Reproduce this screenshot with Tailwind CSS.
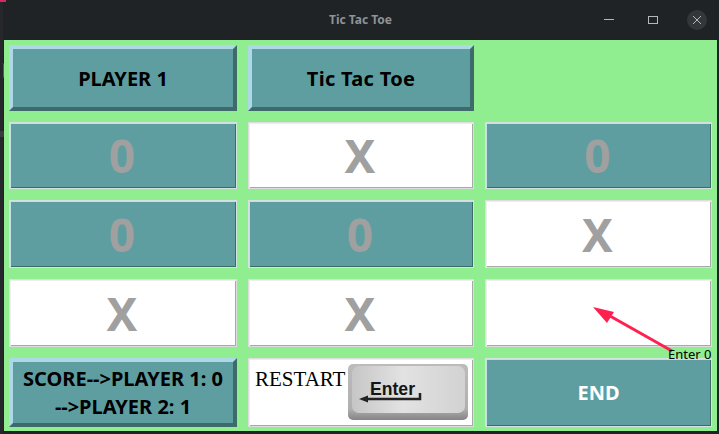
<!DOCTYPE html>
<html lang="en">
<head>
  <meta charset="UTF-8">
  <title>Tic Tac Toe</title>
  <script src="https://cdn.jsdelivr.net/npm/@tailwindcss/browser@4"></script>
</head>
<body class="relative w-[719px] h-[434px] overflow-hidden bg-[#1f2326] font-['Noto_Sans',sans-serif]">
  <!-- desktop showing behind the window on the left -->
  <div class="absolute left-0 top-0 w-[3px] h-[434px] bg-[#25272a]"></div>
  <div class="absolute left-0 top-[131px] w-1 h-[6px] bg-[#3a3c3e]"></div>
  <div class="absolute left-[2px] top-[63px] w-0.5 h-[15px] rounded-r-full border-r border-[#3d5f80]"></div>

  <!-- title bar -->
  <div class="relative flex items-center justify-center h-10 pl-1 pr-0.5 text-xs font-bold text-[#8f9296]">
    Tic Tac Toe
    <div class="absolute left-0 top-0 w-1.5 h-0.5 bg-[#e0245e]"></div>
    <div class="absolute left-[604px] top-[19px] w-2.5 h-px bg-[#b5b7b9]"></div>
    <div class="absolute left-[648px] top-[16px] w-2.5 h-2 border border-[#b5b7b9]"></div>
    <div class="absolute left-[687px] top-[10px] flex items-center justify-center w-5 h-5 rounded-full bg-[#34373a]">
      <svg width="10" height="10" viewBox="0 0 10 10"><path d="M1 1l8 8M9 1l-8 8" stroke="#b5b7b9" stroke-width="1" fill="none"/></svg>
    </div>
  </div>

  <!-- window -->
  <div class="w-[713px] h-[391px] ml-1 pt-[5px] pl-[5px] bg-[#90ee90]">
    <div class="grid grid-cols-[228px_226px_227px] grid-rows-[66px_67px_68px_68px_69px] gap-x-[11px] gap-y-[11px]">
      <div class="flex items-center justify-center pt-0.5 border-4 border-t-[#add8e6] border-l-[#add8e6] border-r-[#3f6a6b] border-b-[#3f6a6b] bg-[#5f9ea0] text-xl font-bold text-black">PLAYER 1</div>
      <div class="flex items-center justify-center pt-0.5 border-4 border-t-[#add8e6] border-l-[#add8e6] border-r-[#3f6a6b] border-b-[#3f6a6b] bg-[#5f9ea0] text-xl tracking-[0.3px] font-bold text-black">Tic Tac Toe</div>
      <div></div>

      <div class="flex items-center justify-center pr-0.5 border border-[#d6e2e2] shadow-[inset_1px_1px_0_#c4e0e6,inset_-1px_-1px_0_#3f6a6b] bg-[#5f9ea0] text-[46px] font-bold text-[#a0a0a0]">0</div>
      <div class="flex items-center justify-center pr-0.5 border border-[#dddddd] shadow-[inset_1px_1px_0_#eeeeee,inset_-1px_-1px_0_#a9a9a9] bg-white text-[46px] font-bold text-[#a0a0a0]">X</div>
      <div class="flex items-center justify-center pr-0.5 border border-[#d6e2e2] shadow-[inset_1px_1px_0_#c4e0e6,inset_-1px_-1px_0_#3f6a6b] bg-[#5f9ea0] text-[46px] font-bold text-[#a0a0a0]">0</div>

      <div class="flex items-center justify-center pr-0.5 border border-[#d6e2e2] shadow-[inset_1px_1px_0_#c4e0e6,inset_-1px_-1px_0_#3f6a6b] bg-[#5f9ea0] text-[46px] font-bold text-[#a0a0a0]">0</div>
      <div class="flex items-center justify-center pr-0.5 border border-[#d6e2e2] shadow-[inset_1px_1px_0_#c4e0e6,inset_-1px_-1px_0_#3f6a6b] bg-[#5f9ea0] text-[46px] font-bold text-[#a0a0a0]">0</div>
      <div class="flex items-center justify-center pr-0.5 border border-[#dddddd] shadow-[inset_1px_1px_0_#eeeeee,inset_-1px_-1px_0_#a9a9a9] bg-white text-[46px] font-bold text-[#a0a0a0]">X</div>

      <div class="flex items-center justify-center pr-0.5 border border-[#dddddd] shadow-[inset_1px_1px_0_#eeeeee,inset_-1px_-1px_0_#a9a9a9] bg-white text-[46px] font-bold text-[#a0a0a0]">X</div>
      <div class="flex items-center justify-center pr-0.5 border border-[#dddddd] shadow-[inset_1px_1px_0_#eeeeee,inset_-1px_-1px_0_#a9a9a9] bg-white text-[46px] font-bold text-[#a0a0a0]">X</div>
      <div class="border border-[#dddddd] shadow-[inset_1px_1px_0_#eeeeee,inset_-1px_-1px_0_#a9a9a9] bg-white"></div>

      <div class="flex items-center justify-center border-4 border-t-[#add8e6] border-l-[#add8e6] border-r-[#3f6a6b] border-b-[#3f6a6b] bg-[#5f9ea0] text-xl leading-7 font-bold text-black text-center">SCORE--&gt;PLAYER 1: 0<br>--&gt;PLAYER 2: 1</div>
      <div class="flex items-start gap-[3px] pl-1.5 pt-1 border border-[#dddddd] shadow-[inset_1px_1px_0_#eeeeee,inset_-1px_-1px_0_#a9a9a9] bg-white font-['Liberation_Serif',serif] text-[21px] leading-6 text-black">
        <span class="mt-1">RESTART</span>
        <svg width="120" height="56" viewBox="0 0 120 56" class="shrink-0 mt-px">
          <defs>
            <linearGradient id="face" x1="0" x2="1" y1="0" y2="0">
              <stop offset="0" stop-color="#c6c6c6"/><stop offset="0.45" stop-color="#e2e2e2"/><stop offset="1" stop-color="#d2d2d2"/>
            </linearGradient>
            <linearGradient id="edge" x1="0" x2="0" y1="0" y2="1">
              <stop offset="0" stop-color="#bcbcbc"/><stop offset="0.8" stop-color="#b0b0b0"/><stop offset="1" stop-color="#858585"/>
            </linearGradient>
          </defs>
          <rect x="0" y="0" width="120" height="56" rx="5" fill="url(#edge)"/>
          <rect x="4" y="2" width="113" height="47" rx="7" fill="url(#face)"/>
          <text x="22" y="31" font-family="Liberation Sans, sans-serif" font-weight="700" font-size="19" textLength="45" lengthAdjust="spacingAndGlyphs" fill="#151515">Enter</text>
          <path d="M72 29v6H17" stroke="#222" stroke-width="2.5" fill="none"/>
          <path d="M11 35l9-3.5v7z" fill="#222"/>
        </svg>
      </div>
      <div class="flex items-center justify-center border border-[#d6e2e2] shadow-[inset_1px_1px_0_#c4e0e6,inset_-1px_-1px_0_#3f6a6b] bg-[#5f9ea0] text-xl font-bold text-white">END</div>
    </div>
  </div>

  <!-- annotation over the window -->
  <svg class="absolute left-0 top-0" width="719" height="434" viewBox="0 0 719 434">
    <path d="M672 351L610 316" stroke="#ff2050" stroke-width="3" fill="none"/>
    <path d="M593 307L614 312L607 323z" fill="#ff2050"/>
  </svg>
  <div class="absolute left-[668px] top-[346px] text-[13px] leading-4 text-black">Enter 0</div>
</body>
</html>
